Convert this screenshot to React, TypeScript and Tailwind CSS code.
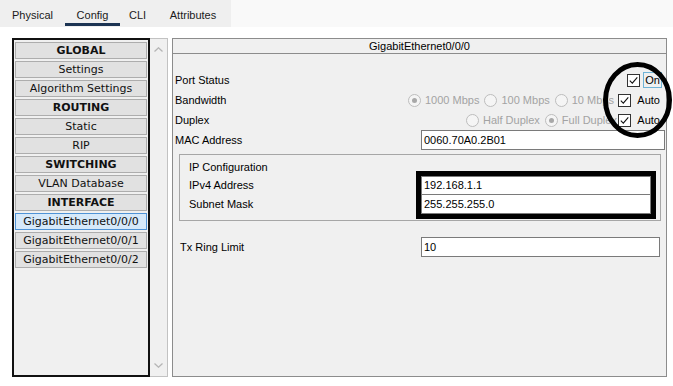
import React from "react";

function Check() {
  return (
    <span className="flex h-[13px] w-[13px] shrink-0 items-center justify-center border border-[#333333] bg-white">
      <svg width="11" height="11" viewBox="0 0 11 11">
        <path d="M1.8 5.6 L4.3 8.1 L9.3 2.4" fill="none" stroke="#111" strokeWidth="1.1" />
      </svg>
    </span>
  );
}

function Radio({ on }: { on?: boolean }) {
  return (
    <span className="flex h-[13px] w-[13px] shrink-0 items-center justify-center rounded-full border border-[#bdbdbd] bg-[#f5f5f5]">
      {on && <span className="h-[5px] w-[5px] rounded-full bg-[#a8a8a8]" />}
    </span>
  );
}

const navItems: { label: string; bold?: boolean; selected?: boolean }[] = [
  { label: "GLOBAL", bold: true },
  { label: "Settings" },
  { label: "Algorithm Settings" },
  { label: "ROUTING", bold: true },
  { label: "Static" },
  { label: "RIP" },
  { label: "SWITCHING", bold: true },
  { label: "VLAN Database" },
  { label: "INTERFACE", bold: true },
  { label: "GigabitEthernet0/0/0", selected: true },
  { label: "GigabitEthernet0/0/1" },
  { label: "GigabitEthernet0/0/2" },
];

export default function App() {
  return (
    <div className="relative h-[386px] w-[673px] overflow-hidden bg-white font-['Liberation_Sans',Arial,sans-serif] text-[11px] text-black">
      {/* Tabs */}
      <div className="flex h-[27px] bg-[#f9f9f9]">
        <div className="flex w-[231px] bg-[#efefef] text-[#1a1a1a]">
          <div className="flex w-[65px] flex-col items-center pt-[8px]">
            <span className="leading-[14px]">Physical</span>
          </div>
          <div className="flex w-[55px] flex-col items-center pt-[8px]">
            <span className="leading-[14px]">Config</span>
            <span className="mt-[1px] h-[3px] w-full bg-[#1c3453]" />
          </div>
          <div className="flex w-[35px] flex-col items-center pt-[8px]">
            <span className="leading-[14px]">CLI</span>
          </div>
          <div className="flex w-[76px] flex-col items-center pt-[8px]">
            <span className="leading-[14px]">Attributes</span>
          </div>
        </div>
      </div>

      {/* Body */}
      <div className="mt-[11px] flex gap-[4px]">
        {/* Left navigation */}
        <div className="ml-[12px] flex h-[339px] w-[156px]">
          <div className="flex w-[138px] flex-col gap-[2px] border-2 border-[#111] bg-[#f0f0f0] px-px pt-[2px] font-['DejaVu_Sans',Verdana,sans-serif] text-[11px] text-[#111]">
            {navItems.map((it) => (
              <div
                key={it.label}
                className={
                  it.selected
                    ? "h-[17px] border border-[#4f93d6] bg-[#d6e9fa] text-center leading-[15px]"
                    : it.bold
                    ? "h-[17px] border border-[#adadad] bg-[#e1e1e1] text-center font-bold leading-[15px]"
                    : "h-[17px] border border-[#adadad] bg-[#e1e1e1] text-center leading-[15px]"
                }
              >
                {it.label}
              </div>
            ))}
          </div>
          <div className="flex w-[18px] flex-col items-center justify-between border-y border-r border-[#c2c2c2] bg-[#f0f0f0] pt-[8px] pb-[8px]">
            <svg width="9" height="5" viewBox="0 0 9 5">
              <path d="M0.5 4.5 L4.5 0.8 L8.5 4.5" fill="none" stroke="#b5b5b5" strokeWidth="1.3" />
            </svg>
            <svg width="9" height="5" viewBox="0 0 9 5">
              <path d="M0.5 0.5 L4.5 4.2 L8.5 0.5" fill="none" stroke="#b5b5b5" strokeWidth="1.3" />
            </svg>
          </div>
        </div>

        {/* Right panel */}
        <div className="flex h-[339px] w-[495px] flex-col border border-[#8c8c8c] bg-[#f0f0f0]">
          <div className="h-[15px] border-b border-[#8c8c8c] text-center leading-[14px]">
            GigabitEthernet0/0/0
          </div>

          {/* Port Status */}
          <div className="mt-[16px] flex h-[20px] items-center">
            <span className="flex-1 pl-[2px]">Port Status</span>
            <Check />
            <span className="ml-[3px] mr-[4px] flex h-[16px] items-center border border-[#6fb3d6] px-[1px]">On</span>
          </div>

          {/* Bandwidth */}
          <div className="flex h-[20px] items-center">
            <span className="w-[235px] shrink-0 pl-[2px]">Bandwidth</span>
            <div className="flex items-center text-[#a3a3a3]">
              <Radio on />
              <span className="ml-[4px]">1000 Mbps</span>
              <span className="ml-[5px]">
                <Radio />
              </span>
              <span className="ml-[4px]">100 Mbps</span>
              <span className="ml-[5px]">
                <Radio />
              </span>
              <span className="ml-[4px]">10 Mbps</span>
            </div>
            <div className="ml-auto flex items-center pr-[6px]">
              <Check />
              <span className="ml-[6px]">Auto</span>
            </div>
          </div>

          {/* Duplex */}
          <div className="flex h-[20px] items-center">
            <span className="w-[293px] shrink-0 pl-[2px]">Duplex</span>
            <div className="flex items-center text-[#a3a3a3]">
              <Radio />
              <span className="ml-[4px]">Half Duplex</span>
              <span className="ml-[5px]">
                <Radio on />
              </span>
              <span className="ml-[4px] whitespace-nowrap">Full Duplex</span>
            </div>
            <div className="relative ml-auto flex items-center bg-[#f0f0f0] pr-[6px]">
              <Check />
              <span className="ml-[6px]">Auto</span>
            </div>
          </div>

          {/* MAC Address */}
          <div className="flex h-[20px] items-center">
            <span className="w-[248px] shrink-0 pl-[2px]">MAC Address</span>
            <div className="flex h-[20px] w-[244px] items-center border border-[#7a7a7a] bg-white pl-[2px]">
              0060.70A0.2B01
            </div>
          </div>

          {/* IP Configuration group */}
          <div className="mt-[4px] ml-[6px] mr-[5px] flex flex-col border border-[#a6a6a6] pt-[5px] pb-[6px]">
            <div className="h-[14px] pl-[9px] leading-[14px]">IP Configuration</div>
            <div className="mt-[2px] flex">
              <div className="flex w-[241px] shrink-0 flex-col pl-[9px]">
                <div className="flex h-[19px] items-center">IPv4 Address</div>
                <div className="flex h-[19px] items-center">Subnet Mask</div>
              </div>
              <div className="flex w-[230px] flex-col outline-[5px] outline-solid outline-black">
                <div className="flex h-[19px] items-center border border-[#7a7a7a] bg-white pl-[2px]">192.168.1.1</div>
                <div className="flex h-[19px] items-center border border-t-0 border-[#7a7a7a] bg-white pl-[2px]">255.255.255.0</div>
              </div>
            </div>
          </div>

          {/* Tx Ring Limit */}
          <div className="mt-[16px] flex h-[20px] items-center">
            <span className="w-[248px] shrink-0 pl-[7px]">Tx Ring Limit</span>
            <div className="flex h-[20px] w-[239px] items-center border border-[#7a7a7a] bg-white pl-[2px]">10</div>
          </div>
        </div>
      </div>

      {/* Annotation ellipse */}
      <svg className="absolute left-[598px] top-[58px]" width="80" height="84" viewBox="0 0 80 84">
        <ellipse cx="39.5" cy="42" rx="32" ry="35.5" fill="none" stroke="#000" strokeWidth="5" />
      </svg>
    </div>
  );
}
